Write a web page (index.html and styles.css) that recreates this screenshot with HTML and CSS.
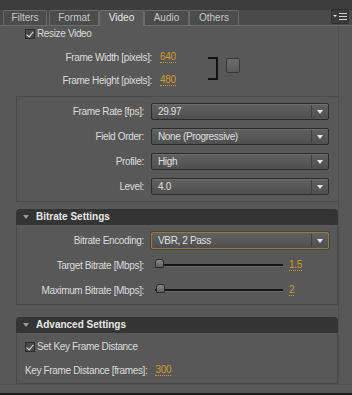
FILE: index.html
```html
<!DOCTYPE html>
<html lang="en">
<head>
<meta charset="UTF-8">
<title>Export Settings - Video</title>
<link rel="stylesheet" href="styles.css">
</head>
<body>
<div class="app">

  <!-- TAB BAR -->
  <div class="tabbar">
    <div class="tabs">
      <div class="tab t-filters">Filters</div>
      <div class="tab t-format">Format</div>
      <div class="tab t-video active">Video</div>
      <div class="tab t-audio">Audio</div>
      <div class="tab t-others">Others</div>
    </div>
    <div class="menu-btn">
      <svg width="14" height="9" viewBox="0 0 14 9">
        <path d="M0 3h4L2 5z" fill="#e8e8e8"/>
        <rect x="6" y="1" width="8" height="1" fill="#d0d0d0"/>
        <rect x="6" y="4" width="8" height="1" fill="#d0d0d0"/>
        <rect x="6" y="7" width="8" height="1" fill="#d0d0d0"/>
      </svg>
    </div>
  </div>

  <!-- SCROLL CONTENT -->
  <div class="content">
    <div class="check-row top-check"><span class="box checked"></span>Resize Video</div>

    <div class="frame-size">
      <div class="dims">
        <div class="row"><span class="lbl">Frame Width [pixels]:</span><span class="val">640</span></div>
        <div class="row"><span class="lbl">Frame Height [pixels]:</span><span class="val">480</span></div>
      </div>
      <div class="bracket"></div>
      <div class="link-btn"></div>
    </div>

    <div class="group">
      <div class="row"><span class="lbl">Frame Rate [fps]:</span><div class="select">29.97</div></div>
      <div class="row"><span class="lbl">Field Order:</span><div class="select">None (Progressive)</div></div>
      <div class="row"><span class="lbl">Profile:</span><div class="select">High</div></div>
      <div class="row"><span class="lbl">Level:</span><div class="select">4.0</div></div>
    </div>

    <div class="section">
      <div class="section-head"><span class="tri"></span>Bitrate Settings</div>
      <div class="section-body">
        <div class="row"><span class="lbl">Bitrate Encoding:</span><div class="select focus">VBR, 2 Pass</div></div>
        <div class="row"><span class="lbl">Target Bitrate [Mbps]:</span><div class="slider"><span class="thumb" style="left:0"></span></div><span class="val">1.5</span></div>
        <div class="row"><span class="lbl">Maximum Bitrate [Mbps]:</span><div class="slider"><span class="thumb" style="left:1px"></span></div><span class="val">2</span></div>
      </div>
    </div>

    <div class="section adv-section">
      <div class="section-head"><span class="tri"></span>Advanced Settings</div>
      <div class="section-body adv">
        <div class="check-row"><span class="box checked"></span>Set Key Frame Distance</div>
        <div class="kf-row"><span>Key Frame Distance [frames]:</span><span class="val">300</span></div>
      </div>
    </div>
  </div>

  <div class="footer"></div>
</div>
</body>
</html>
```

FILE: styles.css
```css
/* -------- RESET -------- */
*{margin:0;padding:0;box-sizing:border-box}

:root{
  --bg:#585858;
  --text:#dcdcdc;
  --value:#d39a2a;
  --head:#343434;
  --line:#4b4b4b;
}

body{
  font-family:"Liberation Sans",Arial,sans-serif;
  font-size:10px;letter-spacing:-.35px;
  color:var(--text);
  background:var(--bg);
  width:352px;height:395px;overflow:hidden;
}
.app{width:352px;height:395px;display:flex;flex-direction:column;background:var(--bg)}

/* -------- TABS -------- */
.tabbar{
  height:26px;flex:none;
  background:linear-gradient(#3d3d3d 0,#3d3d3d 10px,#4a4a4a 10px);
  border-bottom:1px solid #6d6d6d;
  display:flex;justify-content:space-between;align-items:flex-end;
  padding:0 3px;
}
.tabs{display:flex;align-items:flex-end}
.tab{
  height:15px;line-height:14px;text-align:center;font-size:10px;letter-spacing:0;
  background:#4c4c4c;color:#c8c8c8;
  border:1px solid #6a6a6a;border-bottom:none;
  border-radius:2px 2px 0 0;
}
.t-filters{width:44px;margin-right:2px}
.t-format{width:50px}
.t-video{width:45px}
.t-audio{width:45px}
.t-others{width:50px}
.tab.active{background:var(--bg);color:#e8e8e8;height:16px;margin-bottom:-1px;border-color:#6d6d6d}
.menu-btn{
  width:18px;height:15px;margin-bottom:1px;
  background:#3b3b3b;border:1px solid #2e2e2e;border-radius:2px;
  display:flex;align-items:center;justify-content:center;
}

/* -------- CONTENT -------- */
.content{
  flex:1;padding:2px 0 0 16px;
  width:339px;border-right:1px solid #4e4e4e;
}
.check-row{display:flex;align-items:center;height:11px;gap:2px}
.top-check{margin-left:9px}
.box{
  width:10px;height:10px;border:1px solid #2c2c2c;background:#4a4a4a;
  position:relative;flex:none;
}
.box.checked::after{
  content:'';position:absolute;left:2px;top:0;width:3px;height:6px;
  border:solid #e4e4e4;border-width:0 1.5px 1.5px 0;transform:rotate(40deg);
}

.row{display:flex;align-items:center;height:17px}
.lbl{width:134px;text-align:right;padding-right:7px;flex:none}
.val{color:var(--value);border-bottom:1px dotted var(--value);line-height:10px}

/* frame size block */
.frame-size{display:flex;align-items:flex-start;margin-top:7px;height:50px}
.dims{width:192px}
.dims .row{height:23px}
.dims .lbl{width:144px;padding-right:8px}
.bracket{
  width:10px;height:23px;margin-top:11px;
  border:2px solid #111;border-left:none;
}
.link-btn{
  width:14px;height:15px;margin-left:8px;margin-top:12px;
  background:linear-gradient(#6c6c6c,#5a5a5a);
  border:1px solid #383838;border-radius:2px;
}

/* dropdown group */
.group{
  width:322px;height:106px;padding-top:6px;
  border:1px solid var(--line);border-right:none;
  display:flex;flex-direction:column;gap:8px;
}
.select{
  width:178px;height:17px;line-height:15px;padding-left:6px;
  background:linear-gradient(#616161,#4f4f4f);
  border:1px solid #2b2b2b;border-radius:2px;
  position:relative;color:#e0e0e0;
  box-shadow:inset 0 1px 0 rgba(255,255,255,.08);
}
.select::after{
  content:'';position:absolute;right:0;top:1px;bottom:1px;width:16px;
  border-left:1px solid #3f3f3f;
}
.select::before{
  content:'';position:absolute;right:5px;top:6px;
  border:3px solid transparent;border-top:4px solid #e8e8e8;border-bottom:none;
}
.select.focus{border:1px solid #8d7a47;box-shadow:0 0 0 1px #4d4535}

/* sections */
.section{width:322px;margin-top:7px}
.adv-section{margin-top:12px}
.section-head{
  height:16px;line-height:16px;background:var(--head);
  border-radius:4px 4px 0 0;font-weight:bold;font-size:10px;letter-spacing:0;color:#e8e8e8;
  display:flex;align-items:center;
}
.tri{
  width:0;height:0;margin:0 7px;
  border:3px solid transparent;border-top:4px solid #9a9a9a;border-bottom:none;
}
.section-body{
  border:1px solid var(--line);border-top:none;padding-top:7px;height:80px;
  display:flex;flex-direction:column;gap:8px;
}
.slider{
  width:128px;height:3px;margin-left:4px;margin-right:6px;
  background:#151515;border-bottom:1px solid #6a6a6a;position:relative;
}
.thumb{
  position:absolute;top:-5px;width:9px;height:9px;
  background:linear-gradient(#8a8a8a,#5e5e5e);
  border:1px solid #2a2a2a;border-radius:3px 3px 1px 1px;
}
.adv{height:51px;padding:8px 0 0 8px;gap:13px}
.kf-row{display:flex;align-items:center;gap:8px}

/* -------- FOOTER -------- */
.footer{height:12px;flex:none;border-top:1px solid #4e4e4e;background:linear-gradient(#585858 0,#585858 8px,#1c1c1c 8px)}
```
